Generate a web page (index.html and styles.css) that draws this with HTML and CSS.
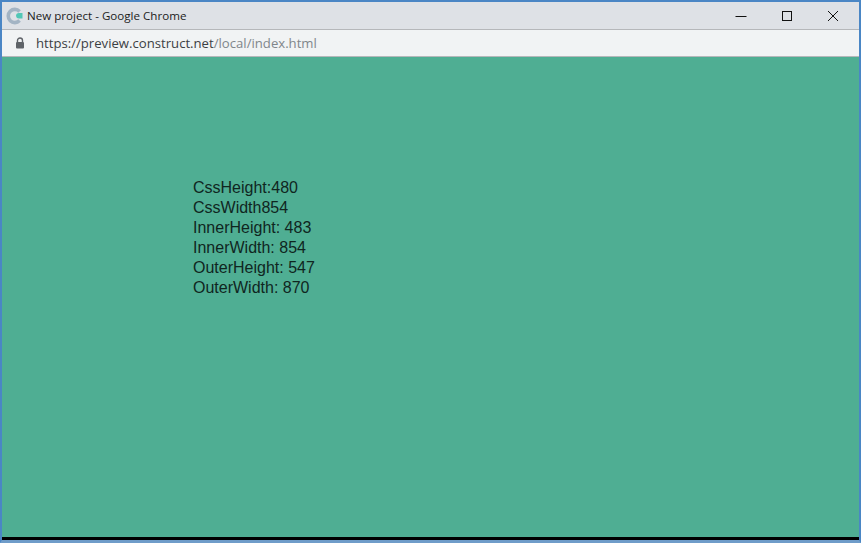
FILE: index.html

```html
<!DOCTYPE html>
<html lang="en">
<head>
  <meta charset="UTF-8" />
  <title>New project - Google Chrome</title>
  <link rel="stylesheet" href="styles.css">
</head>
<body>
  <div class="window">
    <div class="title-bar">
      <svg class="app-icon" width="18" height="18" viewBox="0 0 18 18">
        <path d="M14.6 4.4A6.6 6.6 0 1 0 14.6 13.6" fill="none" stroke="#a3b4c4" stroke-width="3.6"/>
        <path d="M11 9a3 3 0 0 1 3-3h3.5v5.6H14A3 3 0 0 1 11 9z" fill="#52c7b6"/>
      </svg>
      <span class="title">New project - Google Chrome</span>
      <div class="window-buttons">
        <svg width="14" height="14" viewBox="0 0 14 14"><path d="M1.5 7.5h11" stroke="#111" fill="none"/></svg>
        <svg width="14" height="14" viewBox="0 0 14 14"><rect x="2.5" y="2.5" width="9" height="9" stroke="#111" fill="none"/></svg>
        <svg width="14" height="14" viewBox="0 0 14 14"><path d="M2 2l10 10M12 2L2 12" stroke="#111" fill="none"/></svg>
      </div>
    </div>
    <div class="address-bar">
      <svg class="lock" width="10" height="12" viewBox="0 0 10 12">
        <path d="M2.5 5V3.5a2.5 2.5 0 0 1 5 0V5" fill="none" stroke="#5f6368" stroke-width="1.4"/>
        <rect x="1" y="5" width="8" height="6.5" rx="1" fill="#5f6368"/>
      </svg>
      <span class="url"><span class="url-host">https://preview.construct.net</span>/local/index.html</span>
    </div>
    <div class="canvas">
      <div class="stats">
        <div>CssHeight:480</div>
        <div>CssWidth854</div>
        <div>InnerHeight: 483</div>
        <div>InnerWidth: 854</div>
        <div>OuterHeight: 547</div>
        <div>OuterWidth: 870</div>
      </div>
    </div>
    <div class="black-strip"></div>
  </div>
</body>
</html>
```

FILE: styles.css

```css
* { margin: 0; padding: 0; box-sizing: border-box; }
html, body {
  width: 861px;
  height: 543px;
  overflow: hidden;
}
.window {
  width: 861px;
  height: 543px;
  display: flex;
  flex-direction: column;
  border: 2px solid #4a86c5;
  border-bottom: 3px solid #6f9cc9;
  background: #dee1e6;
}
.title-bar {
  height: 28px;
  flex: none;
  display: flex;
  align-items: center;
  padding-left: 3px;
  background: #dee1e6;
  border-bottom: 1px solid #b5b7ba;
}
.app-icon { flex: none; }
.title {
  margin-left: 4px;
  font-family: "Open Sans", sans-serif;
  font-size: 11.6px;
  color: #1c1c1c;
}
.window-buttons {
  margin-left: auto;
  display: flex;
  gap: 32px;
  padding-right: 19px;
}
.address-bar {
  height: 27px;
  flex: none;
  display: flex;
  align-items: center;
  padding-left: 13px;
  background: #f1f3f4;
  border-bottom: 1px solid #b5b7ba;
}
.lock { flex: none; }
.url {
  margin-left: 11px;
  font-family: "Open Sans", sans-serif;
  font-size: 13.15px;
  color: #80868b;
}
.url-host { color: #3c4043; }
.canvas {
  flex: 1;
  background: #4fae93;
  padding: 121px 0 0 191px;
}
.stats {
  font-family: "Liberation Sans", Arial, sans-serif;
  font-size: 16px;
  line-height: 20px;
  color: #10261f;
}
.black-strip {
  height: 3px;
  flex: none;
  background: #000;
}
```
